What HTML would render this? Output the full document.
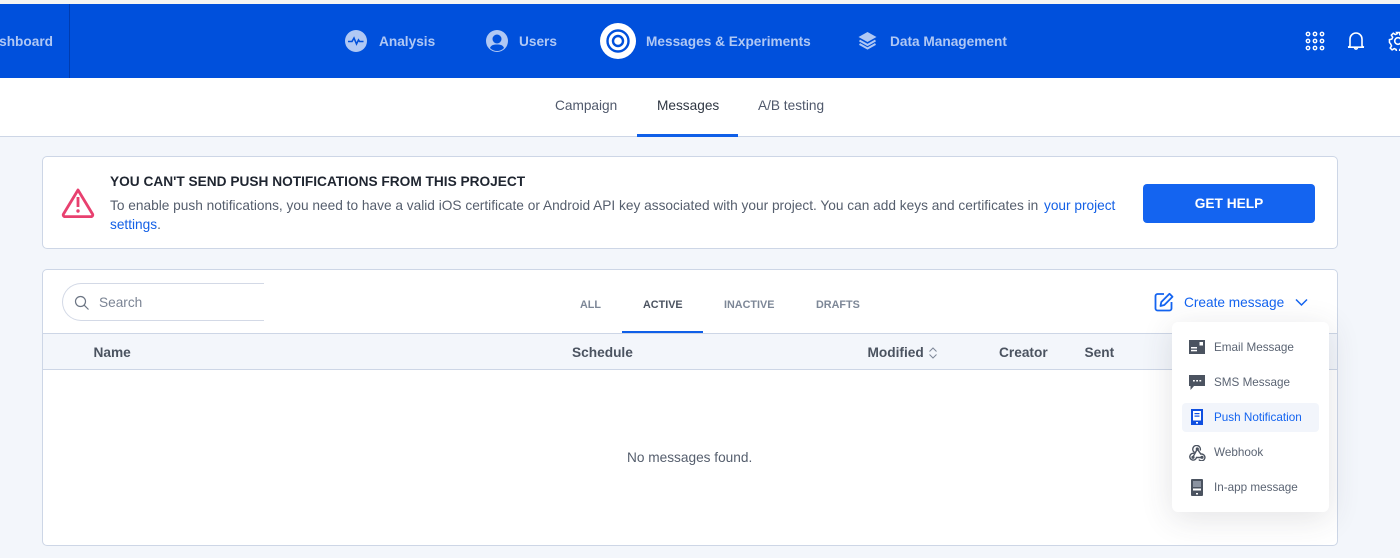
<!DOCTYPE html>
<html><head><meta charset="utf-8">
<style>
html,body{margin:0;padding:0}
body{width:1400px;height:558px;overflow:hidden;position:relative;background:#f3f6fb;font-family:"Liberation Sans",sans-serif;color:#50596c}
.a{position:absolute;white-space:nowrap}
svg{position:absolute;display:block}
.nav{font-size:13.67px;font-weight:700;color:#b0c8f4;line-height:16px;top:34px}
.sub{font-size:13.67px;line-height:16px;top:98px;color:#50596c}
.tab{font-size:10.8px;font-weight:700;line-height:13px;top:299px;color:#7d8797}
.th{font-size:13.7px;font-weight:700;line-height:16px;top:345px;color:#4b5360}
.mi{font-size:11.7px;line-height:14px;left:1214px;color:#5b6473}
</style></head><body>
<div class="a" style="left:0;top:0;width:1400px;height:4px;background:#f5f5f3"></div>
<div class="a" style="left:0;top:4px;width:1400px;height:74px;background:#0050dc"></div>
<div class="a" style="left:69px;top:4px;width:1px;height:74px;background:#003cb0"></div>
<div class="a nav" style="left:-10px;width:63px;text-align:right;overflow:hidden;direction:rtl">shboard</div>

<svg style="left:345px;top:30px" width="22" height="22" viewBox="0 0 22 22"><circle cx="11" cy="11" r="11" fill="#b0c8f4"/><path d="M3 11.500h4l2-3.500 2.500 6 2-4 1 1.500h4" fill="none" stroke="#0050dc" stroke-width="1.600"/></svg>
<div class="a nav" style="left:379px">Analysis</div>

<svg style="left:486px;top:30px" width="22" height="22" viewBox="0 0 22 22"><circle cx="11" cy="11" r="11" fill="#b0c8f4"/><circle cx="11" cy="9" r="4.500" fill="#0050dc"/><path d="M4 18c1-3 3.500-3.500 7-3.500s6 .5 7 3.500c-2 2-4.500 3-7 3s-5-1-7-3z" fill="#0050dc"/></svg>
<div class="a nav" style="left:519px">Users</div>

<svg style="left:600px;top:23px" width="36" height="36" viewBox="0 0 36 36"><circle cx="18" cy="18" r="18" fill="#fff"/><circle cx="18" cy="18" r="10.500" fill="none" stroke="#0050dc" stroke-width="2.400"/><circle cx="18" cy="18" r="5" fill="none" stroke="#0050dc" stroke-width="2.400"/></svg>
<div class="a nav" style="left:646px">Messages &amp; Experiments</div>

<svg style="left:858px;top:32px" width="19" height="18" viewBox="0 0 19 18"><path d="M9.500 0 18.500 5 9.500 10 .5 5z" fill="#b0c8f4"/><path d="M1.500 8.500 9.500 13l8-4.500M1.500 12 9.500 16.500l8-4.500" fill="none" stroke="#b0c8f4" stroke-width="2"/></svg>
<div class="a nav" style="left:890px">Data Management</div>

<svg style="left:1305px;top:31px" width="20" height="20" viewBox="0 0 20 20" fill="none" stroke="#fff" stroke-width="1.400"><circle cx="3" cy="3" r="1.700"/><circle cx="10" cy="3" r="1.700"/><circle cx="17" cy="3" r="1.700"/><circle cx="3" cy="10" r="1.700"/><circle cx="10" cy="10" r="1.700"/><circle cx="17" cy="10" r="1.700"/><circle cx="3" cy="17" r="1.700"/><circle cx="10" cy="17" r="1.700"/><circle cx="17" cy="17" r="1.700"/></svg>
<svg style="left:1347px;top:32px" width="18" height="19" viewBox="0 0 18 19" fill="none" stroke="#fff" stroke-width="1.600"><path d="M3 13.500V7a6 6 0 0 1 12 0v6.500M1 15.200c1-.2 2-.7 2-1.700M17 15.200c-1-.2-2-.7-2-1.700M1 15.200h16"/><path d="M7.500 16a1.600 1.600 0 0 0 3 0"/></svg>
<svg style="left:1388px;top:31px" width="20" height="20" viewBox="0 0 20 20" fill="none" stroke="#fff" stroke-width="1.600"><circle cx="10" cy="10" r="3.300"/><path d="M8.500 1h3l.5 2.500 2 .9 2.200-1.400 2 2-1.400 2.200.9 2 2.500.5v3l-2.500.5-.9 2 1.400 2.200-2 2-2.200-1.400-2 .9-.5 2.500h-3l-.5-2.500-2-.9-2.200 1.400-2-2 1.400-2.200-.9-2L1 11.500v-3l2.500-.5.9-2L3 3.800l2-2 2.200 1.400 2-.9z" transform="translate(.5 .5) scale(.95)"/></svg>

<div class="a" style="left:0;top:78px;width:1400px;height:58px;background:#fff;border-bottom:1px solid #cdd6e6"></div>
<div class="a sub" style="left:555px">Campaign</div>
<div class="a sub" style="left:657px;color:#2f3743">Messages</div>
<div class="a sub" style="left:758px">A/B testing</div>
<div class="a" style="left:637px;top:134px;width:101px;height:3px;background:#0f5fe8"></div>

<div class="a" style="left:42px;top:156px;width:1294px;height:91px;background:#fff;border:1px solid #cdd6e6;border-radius:5px"></div>
<svg style="left:61px;top:187px" width="34" height="32" viewBox="0 0 34 32"><path d="M17 3 31.500 27a1.700 1.700 0 0 1-1.500 2.600H4A1.700 1.700 0 0 1 2.500 27z" fill="none" stroke="#e8406f" stroke-width="2.800" stroke-linejoin="round"/><path d="M17 10v10" stroke="#e8406f" stroke-width="2.800"/><circle cx="17" cy="24" r="1.700" fill="#e8406f"/></svg>
<div class="a" style="left:110px;top:174px;font-size:13.7px;font-weight:700;line-height:16px;color:#1f2530">YOU CAN'T SEND PUSH NOTIFICATIONS FROM THIS PROJECT</div>
<div class="a" style="left:110px;top:198px;font-size:13.7px;line-height:16px;color:#555e6d">To enable push notifications, you need to have a valid iOS certificate or Android API key associated with your project. You can add keys and certificates in</div>
<div class="a" style="left:1044px;top:198px;font-size:13.67px;line-height:16px;color:#1360e6">your project</div>
<div class="a" style="left:110px;top:217px;font-size:13.67px;line-height:16px;color:#555e6d"><span style="color:#1360e6">settings</span>.</div>
<div class="a" style="left:1143px;top:184px;width:172px;height:39px;background:#1464f0;border-radius:4px;color:#fff;font-size:13.7px;font-weight:700;line-height:40px;text-align:center">GET HELP</div>

<div class="a" style="left:42px;top:269px;width:1294px;height:275px;background:#fff;border:1px solid #cdd6e6;border-radius:5px"></div>
<div class="a" style="left:43px;top:333px;width:1294px;height:35px;background:#f3f6fb;border-top:1px solid #cdd6e6;border-bottom:1px solid #cdd6e6"></div>

<div class="a" style="left:62px;top:283px;width:201px;height:36px;border:1px solid #d3d9e6;border-right:0;border-radius:19px 0 0 19px"></div>
<svg style="left:74px;top:295px" width="16" height="16" viewBox="0 0 16 16" fill="none" stroke="#6c7584" stroke-width="1.200"><circle cx="6.500" cy="6.500" r="5"/><path d="M10.200 10.200 14.500 14.500"/></svg>
<div class="a" style="left:99px;top:295px;font-size:13.67px;line-height:16px;color:#7b8494">Search</div>

<div class="a tab" style="left:580px">ALL</div>
<div class="a tab" style="left:643px;color:#4b5360">ACTIVE</div>
<div class="a tab" style="left:724px">INACTIVE</div>
<div class="a tab" style="left:816px">DRAFTS</div>
<div class="a" style="left:622px;top:331px;width:81px;height:2px;background:#0f5fe8"></div>

<svg style="left:1154px;top:292px" width="20" height="20" viewBox="0 0 20 20" fill="none" stroke="#1464f0" stroke-width="1.800"><path d="M10 2H3.500A2 2 0 0 0 1.500 4v12.500a2 2 0 0 0 2 2H15.500a2 2 0 0 0 2-2V10"/><path d="M6.500 14l.8-4L15.500 1.800l3 3L10.300 13z" stroke-linejoin="round"/></svg>
<div class="a" style="left:1184px;top:295px;font-size:13.67px;line-height:16px;color:#1464f0">Create message</div>
<svg style="left:1295px;top:298px" width="13" height="9" viewBox="0 0 13 9" fill="none" stroke="#1464f0" stroke-width="1.500"><path d="M1 1.500 6.500 7 12 1.500"/></svg>

<div class="a th" style="left:93.500px">Name</div>
<div class="a th" style="left:572px">Schedule</div>
<div class="a th" style="left:867.500px">Modified</div>
<svg style="left:928px;top:347px" width="10" height="12" viewBox="0 0 10 12" fill="none" stroke="#7d8797" stroke-width="1"><path d="M1.500 4.500 5 1l3.500 3.500M1.500 7.500 5 11l3.500-3.500"/></svg>
<div class="a th" style="left:999px">Creator</div>
<div class="a th" style="left:1084.500px">Sent</div>

<div class="a" style="left:627px;top:450px;font-size:13.67px;line-height:16px;color:#555e6d">No messages found.</div>

<div class="a" style="left:1172px;top:322px;width:157px;height:190px;background:#fff;border-radius:6px;box-shadow:0 6px 32px rgba(60,60,70,.14)"></div>
<div class="a" style="left:1182px;top:403px;width:137px;height:29px;background:#f2f5fb;border-radius:4px"></div>

<svg style="left:1189px;top:340px" width="16" height="14" viewBox="0 0 16 14"><rect width="16" height="14" fill="#4b5360"/><rect x="2" y="7" width="6" height="1.500" fill="#fff"/><rect x="2" y="9.800" width="6" height="1.500" fill="#fff"/><rect x="10.500" y="2" width="3.500" height="3.500" fill="#fff"/></svg>
<div class="a mi" style="top:341px">Email Message</div>
<svg style="left:1189px;top:375px" width="16" height="15" viewBox="0 0 16 15"><path d="M0 0h16v11H5l-3.500 4v-4H0z" fill="#4b5360"/><rect x="4" y="5" width="1.800" height="1.500" fill="#fff"/><rect x="7.200" y="5" width="1.800" height="1.500" fill="#fff"/><rect x="10.400" y="5" width="1.800" height="1.500" fill="#fff"/></svg>
<div class="a mi" style="top:376px">SMS Message</div>
<svg style="left:1191px;top:409px" width="12" height="16" viewBox="0 0 12 16"><rect width="12" height="16" fill="#0f4fe0"/><rect x="2" y="2" width="8" height="9.500" fill="#fff"/><rect x="3.500" y="4" width="5" height="1.200" fill="#0f4fe0"/><rect x="3.500" y="6.500" width="5" height="1.200" fill="#0f4fe0"/><rect x="5" y="13" width="2" height="1.600" fill="#fff"/></svg>
<div class="a mi" style="top:411px;color:#1464f0">Push Notification</div>
<svg style="left:1188.500px;top:444.500px" width="17" height="16" viewBox="0 0 17 16" fill="none" stroke="#4b5360" stroke-width="1.400" stroke-linecap="round"><path d="M5.200 7.200A3.800 3.800 0 1 1 11.300 5"/><circle cx="8.300" cy="4" r=".9" fill="#4b5360"/><path d="M8.300 4 4.200 11.600"/><path d="M4.500 8.300A3.400 3.400 0 1 0 7.500 12.500H13"/><circle cx="4" cy="12.300" r=".9" fill="#4b5360"/><circle cx="13" cy="12.300" r=".9" fill="#4b5360"/><path d="M8.800 4.800l3 4.300A3.400 3.400 0 1 1 10.300 15"/></svg>
<div class="a mi" style="top:446px">Webhook</div>
<svg style="left:1191px;top:479px" width="12" height="17" viewBox="0 0 12 17"><rect width="12" height="17" rx="1" fill="#4b5360"/><rect x="2" y="2" width="8" height="6" fill="#8b93a1"/><rect x="2" y="9.500" width="8" height="2" fill="#fff"/><rect x="5" y="14" width="2" height="1.500" fill="#fff"/></svg>
<div class="a mi" style="top:481px">In-app message</div>
</body></html>
